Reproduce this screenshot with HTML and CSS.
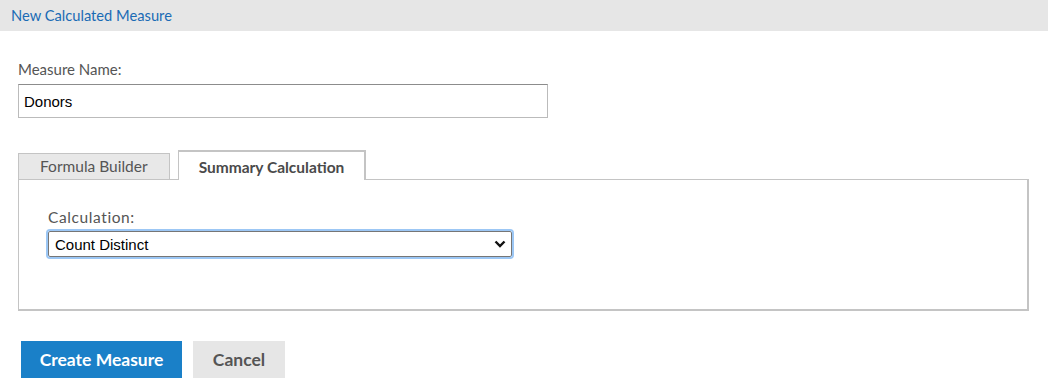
FILE: index.html
```html
<!DOCTYPE html>
<html>
<head>
  <title>New Calculated Measure</title>
  <link rel="stylesheet" href="styles.css">
</head>
<body>
  <div class="dialog-header">New Calculated Measure</div>

  <div class="dialog-body">
    <label class="field-label" for="measureName">Measure Name:</label>
    <input type="text" id="measureName" class="text-input" value="Donors">

    <div class="tabs">
      <div class="tab">Formula Builder</div>
      <div class="tab active">Summary Calculation</div>
    </div>
    <div class="tab-panel">
      <label class="field-label" for="calculation">Calculation:</label>
      <div class="select-wrap">
        <select id="calculation" class="select-input">
          <option>Count Distinct</option>
        </select>
        <svg class="chevron" viewBox="0 0 12 8" fill="none" stroke="currentColor" stroke-width="2.4">
          <polyline points="1.5 1.5 6 6 10.5 1.5"></polyline>
        </svg>
      </div>
    </div>

    <div class="actions">
      <button class="btn primary">Create Measure</button>
      <button class="btn secondary">Cancel</button>
    </div>
  </div>
</body>
</html>
```

FILE: styles.css
```css
body {
  margin: 0;
  font-family: Lato, "Noto Sans", sans-serif;
  background: #ffffff;
  color: #555555;
  width: 1048px;
}

.dialog-header {
  height: 31px;
  line-height: 31px;
  padding-left: 11px;
  background-color: #e6e6e6;
  color: #1a6bb5;
  font-size: 14.7px;
}

.dialog-body {
  padding: 29px 20px 0 18px;
}

.field-label {
  display: block;
  font-size: 15px;
  color: #555555;
  margin-bottom: 6px;
}

.text-input {
  box-sizing: border-box;
  width: 530px;
  height: 34px;
  margin: 0;
  padding: 0 5px;
  border: 1px solid #bbbbbb;
  border-top-color: #8c8c8c;
  font-family: "Liberation Sans", Arial, sans-serif;
  font-size: 15px;
  color: #000000;
  outline: none;
}

.tabs {
  display: flex;
  align-items: flex-end;
  gap: 8px;
  margin-top: 32px;
}

.tab {
  box-sizing: border-box;
  height: 26px;
  line-height: 24px;
  padding: 0 21px;
  border: 1px solid #c4c4c4;
  border-bottom: none;
  background-color: #e8e8e8;
  font-size: 15.5px;
  color: #555555;
}

.tab.active {
  height: 30px;
  line-height: 30px;
  padding: 0 20px;
  background-color: #ffffff;
  font-weight: bold;
  color: #4a4a4a;
  margin-bottom: -1px;
  position: relative;
  border-width: 2px 2px 0 1px;
}

.tab-panel {
  box-sizing: border-box;
  width: 1011px;
  height: 132px;
  border: 1px solid #c4c4c4;
  border-right-width: 2px;
  border-bottom-width: 2px;
  padding: 28px 29px 0;
}

.tab-panel .field-label {
  font-size: 15.5px;
  letter-spacing: 0.6px;
  margin-bottom: 5px;
}

.select-wrap {
  position: relative;
  width: 464px;
  height: 26px;
}

.select-input {
  appearance: none;
  box-sizing: border-box;
  width: 100%;
  height: 100%;
  margin: 0;
  padding: 0 6px;
  border: 1px solid #767676;
  border-radius: 2px;
  outline: 2px solid #9cc7f5;
  background: #ffffff;
  font-family: "Liberation Sans", Arial, sans-serif;
  font-size: 15px;
  color: #000000;
}

.chevron {
  position: absolute;
  right: 6px;
  top: 9px;
  width: 12px;
  height: 8px;
  color: #111111;
  pointer-events: none;
}

.actions {
  display: flex;
  gap: 11px;
  margin-top: 30px;
  padding-left: 3px;
}

.btn {
  height: 37px;
  padding: 0 10px;
  border: none;
  font-family: Lato, "Noto Sans", sans-serif;
  font-size: 17.5px;
  font-weight: bold;
  cursor: pointer;
}

.btn.primary {
  width: 161px;
  background-color: #1a80c8;
  color: #ffffff;
}

.btn.secondary {
  width: 92px;
  background-color: #e6e6e6;
  color: #555555;
}
```
